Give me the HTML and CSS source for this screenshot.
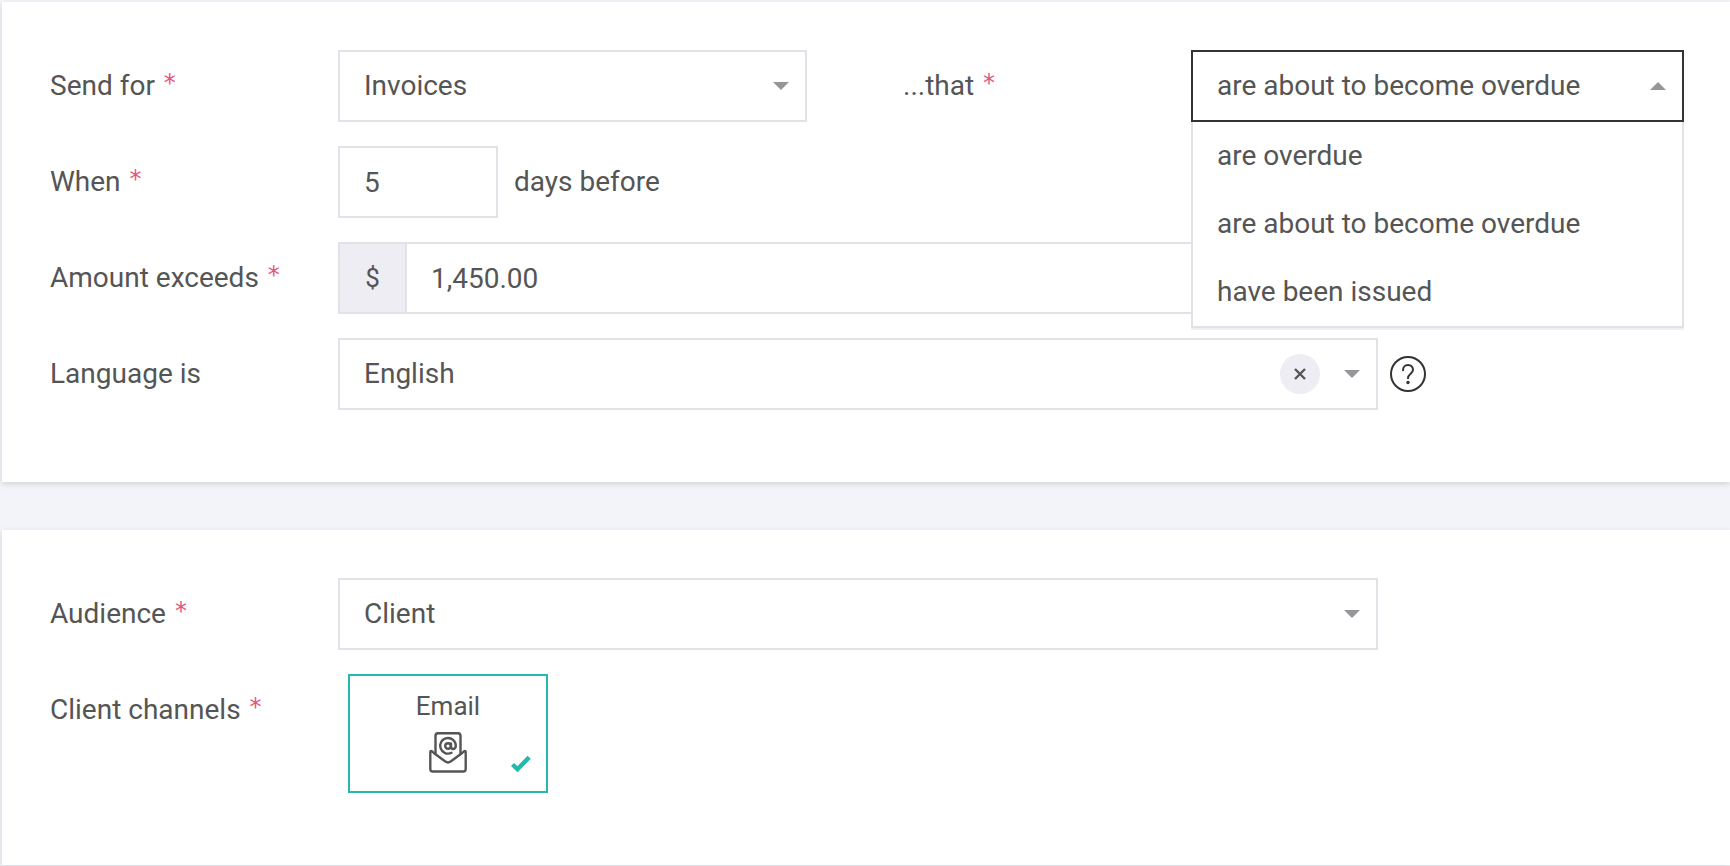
FILE: index.html
```html
<!DOCTYPE html>
<html lang="en">
<head>
<meta charset="utf-8">
<meta name="viewport" content="width=device-width, initial-scale=1">
<title>Reminder rule</title>
<link rel="stylesheet" href="styles.css">
</head>
<body>
<form class="page">
  <section class="panel">
    <div class="row row-pair">
      <label class="label" for="send-for">Send for <span class="required">*</span></label>
      <div class="control">
        <select class="field" id="send-for"><option>Invoices</option></select>
        <span class="caret"></span>
      </div>
      <label class="label label-second" for="state">...that <span class="required">*</span></label>
      <div class="control">
        <button class="field field-open" id="state" type="button" role="combobox" aria-expanded="true" aria-controls="state-list">are about to become overdue</button>
        <span class="caret caret-up"></span>
        <ul class="menu" id="state-list" role="listbox">
          <li class="menu-item" role="option">are overdue</li>
          <li class="menu-item" role="option" aria-selected="true">are about to become overdue</li>
          <li class="menu-item" role="option">have been issued</li>
        </ul>
      </div>
    </div>
    <div class="row">
      <label class="label" for="days">When <span class="required">*</span></label>
      <div class="inline">
        <input class="field field-short" id="days" type="text" value="5">
        <span>days before</span>
      </div>
    </div>
    <div class="row">
      <label class="label" for="amount">Amount exceeds <span class="required">*</span></label>
      <div class="group">
        <span class="prefix">$</span>
        <input class="field field-amount" id="amount" type="text" value="1,450.00">
      </div>
    </div>
    <div class="row">
      <label class="label" for="language">Language is</label>
      <div class="control">
        <select class="field" id="language"><option>English</option></select>
        <button class="clear" type="button" aria-label="Clear language">
          <svg width="12" height="12" viewBox="0 0 12 12"><path d="M1 1L11 11M11 1L1 11" fill="none" stroke="#555" stroke-width="2.4"/></svg>
        </button>
        <span class="caret"></span>
      </div>
      <button class="help" type="button" aria-label="Help">
        <svg width="36" height="36" viewBox="0 0 36 36" fill="none" stroke="#333" stroke-width="2" stroke-linecap="round">
          <circle cx="18" cy="18" r="17"/>
          <path d="M13 14.200C13 11 15.200 9 18 9S23 11 23 13.800C23 17.800 18 17.600 18 22.200"/>
          <circle cx="18" cy="26.500" r="1.700" fill="#333" stroke="none"/>
        </svg>
      </button>
    </div>
  </section>

  <section class="panel">
    <div class="row">
      <label class="label" for="audience">Audience <span class="required">*</span></label>
      <div class="control">
        <select class="field" id="audience"><option>Client</option></select>
        <span class="caret"></span>
      </div>
    </div>
    <div class="row">
      <span class="label" id="channels-label">Client channels <span class="required">*</span></span>
      <div class="channels" role="group" aria-labelledby="channels-label">
        <label class="channel">
          <input class="channel-input" type="checkbox" checked>
          <span class="channel-name">Email</span>
          <svg width="38" height="41" viewBox="0 0 38 41" fill="none" stroke="#555" stroke-width="2.4" stroke-linejoin="round" stroke-linecap="round">
            <path d="M6.500 22V4Q6.500 1.300 9 1.300H29Q31.500 1.300 31.500 4V22"/>
            <path d="M6.500 22.300L3 19.300Q1.300 18.300 1.300 20.300V37Q1.300 39.500 3.800 39.500H34.200Q36.700 39.500 36.700 37V20.300Q36.700 18.300 35 19.300L31.500 22.300L22 29.300Q19 31.500 16 29.300Z"/>
            <circle cx="19" cy="14" r="2.800"/>
            <path d="M22 11.500V15Q22.500 17.200 24.300 17C26 16.800 26.800 15.500 26.800 13.800A7.800 7.800 0 1 0 22.500 20.800"/>
          </svg>
          <svg class="tick" width="20" height="17" viewBox="0 0 20 17"><path d="M1.500 9.500L6.500 14.200L18.200 2.200" fill="none" stroke="#26b7ae" stroke-width="4.400"/></svg>
        </label>
      </div>
    </div>
  </section>
</form>
</body>
</html>
```

FILE: styles.css
```css
* {
  box-sizing: border-box;
}

body {
  margin: 0;
  background: #f3f4f9;
  color: #555;
  font-family: Roboto, "Liberation Sans", sans-serif;
  font-size: 28px;
  line-height: 36px;
}

.page {
  display: flex;
  flex-direction: column;
  gap: 48px;
  padding: 2px 0 1px 2px;
  overflow: hidden;
}

.panel {
  display: flex;
  flex-direction: column;
  gap: 24px;
  padding: 48px 46px 72px 48px;
  background: #fff;
  box-shadow: 0 2px 6px rgba(0, 0, 0, 0.14);
}

.row {
  display: grid;
  grid-template-columns: 288px 1040fr 306fr;
}

.row-pair {
  grid-template-columns: 288px 469fr 384px 493fr;
}

.label {
  padding: 18px 0;
}

.label-second {
  padding-left: 96px;
}

.required {
  margin-left: 2px;
  color: #e5537b;
  font-family: "DejaVu Sans", sans-serif;
  font-size: 24px;
  line-height: 1;
  vertical-align: 4px;
}

.control {
  position: relative;
}

.field {
  display: block;
  width: 100%;
  height: 72px;
  padding: 0 24px;
  border: 2px solid #e3e2e8;
  border-radius: 0;
  outline: 0;
  appearance: none;
  background: #fff;
  color: inherit;
  font: inherit;
  text-align: left;
}

.field-open {
  border-color: #333;
}

.field-short {
  width: 160px;
}

.caret {
  position: absolute;
  top: 32px;
  right: 18px;
  border: 8px solid transparent;
  border-top-color: #969599;
  border-bottom-width: 0;
  pointer-events: none;
}

.caret-up {
  border-top-width: 0;
  border-bottom: 8px solid #969599;
}

.menu {
  position: absolute;
  z-index: 1;
  top: 72px;
  left: 0;
  right: 0;
  margin: 0;
  padding: 0;
  border: 2px solid #e3e2e8;
  border-top: 0;
  background: #fff;
  box-shadow: 0 2px 0 #f0f0f2;
  list-style: none;
}

.menu-item {
  padding: 16px 24px;
}

.inline {
  display: flex;
  align-items: center;
  gap: 16px;
}

.group {
  display: flex;
}

.prefix {
  width: 67px;
  padding: 16px 0;
  border: 2px solid #e3e2e8;
  border-right: 0;
  background: #eeedf3;
  font-size: 26px;
  text-align: center;
}

.field-amount {
  flex: 1;
  min-width: 0;
}

.clear {
  position: absolute;
  top: 16px;
  right: 58px;
  display: flex;
  align-items: center;
  justify-content: center;
  width: 40px;
  height: 40px;
  padding: 0;
  border: 0;
  border-radius: 50%;
  background: #eeedf3;
}

.help {
  display: flex;
  align-items: center;
  justify-self: start;
  padding: 0 0 0 12px;
  border: 0;
  background: none;
}

.channels {
  display: flex;
  padding-left: 10px;
}

.channel {
  position: relative;
  display: flex;
  flex-direction: column;
  align-items: center;
  gap: 8px;
  width: 200px;
  padding: 12px 0 18px;
  border: 2px solid #26b7ae;
}

.channel-input {
  position: absolute;
  inset: 0;
  margin: 0;
  opacity: 0;
}

.channel-name {
  font-size: 26px;
}

.tick {
  position: absolute;
  right: 15px;
  bottom: 19px;
}
```
